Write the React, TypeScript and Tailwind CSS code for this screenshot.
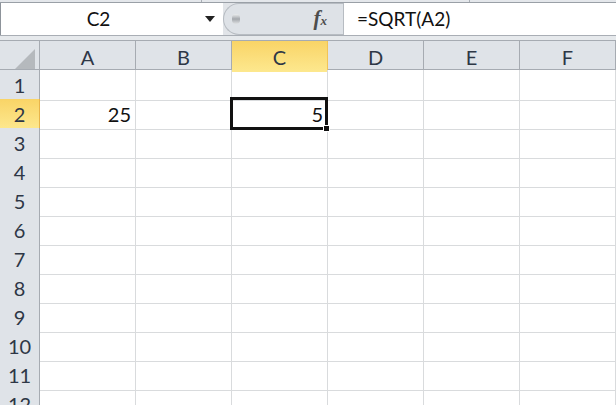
const font = { fontFamily: "Lato, 'Open Sans', sans-serif" };

const columns = ["A", "B", "C", "D", "E", "F"];
const rows = [1, 2, 3, 4, 5, 6, 7, 8, 9, 10, 11, 12];

const cellValues: Record<string, string> = {
  A2: "25",
  C2: "5",
};

function FormulaBar() {
  return (
    <div className="flex h-[33px] border-b border-[#a9aeb5] bg-[#e1e4e8]">
      {/* name box */}
      <div className="relative flex w-[223px] items-center border-l border-[#8d939a] bg-white">
        <div className="w-[195px] text-center text-[19px] text-[#111]">C2</div>
        <div className="ml-[9px] h-0 w-0 border-x-[5px] border-t-[6px] border-x-transparent border-t-[#222]" />
      </div>
      {/* splitter + fx */}
      <div className="flex w-[120px] items-center rounded-l-[16px] border border-r-0 border-[#b7bcc2] bg-[#dee2e7]">
        <div className="ml-[8px] h-[10px] w-[8px] rounded-[4px] bg-gradient-to-b from-[#eceeef] via-[#a4a8ad] to-[#dfe1e3]" />
        <div className="ml-auto mr-[16px] flex items-baseline font-['Liberation_Serif',serif] font-bold italic text-[#4d4d4d]">
          <span className="text-[21px]">f</span>
          <span className="text-[13px]">x</span>
        </div>
      </div>
      <div className="flex flex-1 items-center border-l border-[#b7bcc2] bg-white pl-[13px] text-[19px] text-[#111]">
        =SQRT(A2)
      </div>
    </div>
  );
}

function HeaderRow() {
  return (
    <div className="grid h-[30px] grid-cols-[40px_repeat(6,96px)] border-y border-[#a6abb2] bg-[#dfe3e8]">
      <div className="relative border-r border-[#a6abb2]">
        <div className="absolute bottom-[3px] right-[4px] h-0 w-0 border-b-[20px] border-l-[20px] border-b-[#b5b9bd] border-l-transparent" />
      </div>
      {columns.map((col) => {
        const isActive = col === "C";
        return (
          <div
            key={col}
            className={
              isActive
                ? "flex items-center justify-center border-r border-[#f2c456] bg-gradient-to-b from-[#f9d466] to-[#fde88e] pt-[1px] text-[20px] text-[#2e3746]"
                : "flex items-center justify-center border-r border-[#a6abb2] pt-[1px] text-[20px] text-[#2e3746]"
            }
          >
            {col}
          </div>
        );
      })}
    </div>
  );
}

function SheetRow({ row }: { row: number }) {
  const isActive = row === 2;
  return (
    <div className="grid h-[29px] grid-cols-[40px_repeat(6,96px)]">
      <div
        className={
          isActive
            ? "flex items-center justify-center border-r border-b border-[#e8b44a] bg-gradient-to-b from-[#f9d466] to-[#fde88e] text-[20px] text-[#2e3746]"
            : "flex items-center justify-center border-r border-b border-[#a6abb2] bg-[#dfe3e8] text-[20px] text-[#2e3746]"
        }
      >
        {row}
      </div>
      {columns.map((col) => {
        const key = `${col}${row}`;
        const value = cellValues[key];
        const selected = key === "C2";
        return (
          <div
            key={key}
            className={
              selected
                ? "relative z-10 flex items-center justify-end border-r border-b border-[#d9dbdd] pr-[4px] text-[20px] text-[#111]"
                : "relative flex items-center justify-end border-r border-b border-[#d9dbdd] pr-[4px] text-[20px] text-[#111]"
            }
          >
            {value}
            {selected && (
              <>
                <div className="absolute -left-[2px] -top-[2px] -right-[1px] -bottom-[1px] border-[3px] border-[#111]" />
                <div className="absolute -bottom-[3px] -right-[3px] h-[7px] w-[7px] border border-white bg-[#111]" />
              </>
            )}
          </div>
        );
      })}
    </div>
  );
}

export default function App() {
  return (
    <div className="h-[405px] w-[616px] overflow-hidden bg-white" style={font}>
      <div className="flex h-[3px] border-b border-[#9aa0a7] bg-[#e4e7eb]">
        <div className="w-[202px] border-r border-[#a9aeb5]" />
        <div className="w-[268px] border-r border-[#a9aeb5]" />
      </div>
      <FormulaBar />
      <div className="h-[4px] bg-[#e6e9ec]" />
      <HeaderRow />
      {rows.map((row) => (
        <SheetRow key={row} row={row} />
      ))}
    </div>
  );
}
